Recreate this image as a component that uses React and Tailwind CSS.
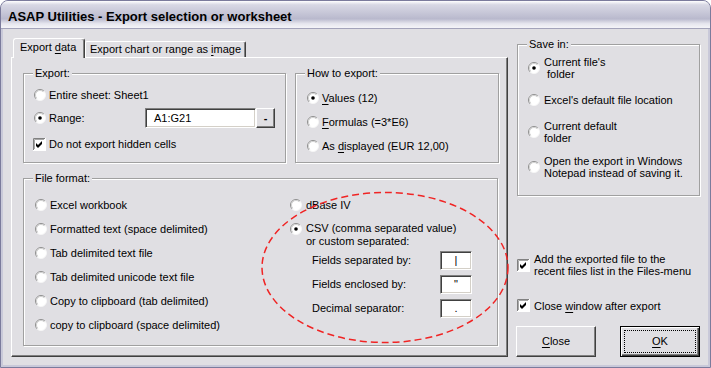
const Radio = ({ checked }) => (
  <svg width="12" height="12" viewBox="0 0 12 12" className="shrink-0">
    <circle cx="6" cy="6" r="5.5" fill="#fff" />
    <path d="M2.1 9.9A5.5 5.5 0 0 1 9.9 2.1" fill="none" stroke="#8f8f8f" />
    <path d="M2.8 9.2A4.5 4.5 0 0 1 9.2 2.8" fill="none" stroke="#cfcfcf" />
    <path d="M9.9 2.1A5.5 5.5 0 0 1 2.1 9.9" fill="none" stroke="#f6f6f6" />
    {checked && <circle cx="6" cy="6" r="1.8" fill="#000" />}
  </svg>
);

const Check = () => (
  <svg width="13" height="13" viewBox="0 0 13 13" className="shrink-0">
    <rect width="13" height="13" fill="#fff" />
    <path d="M0.5 12V0.5H12" fill="none" stroke="#808080" />
    <path d="M1.5 11V1.5H11" fill="none" stroke="#a8a8a8" />
    <path d="M0.5 12.5H12.5V0.5" fill="none" stroke="#fff" />
    <path d="M3 5L5 7L9 3V6L5 10L3 8Z" fill="#000" />
  </svg>
);

const Group = ({ label, className, children }) => (
  <div className={"border border-[#a0a0a0] shadow-[1px_1px_0_#fff,inset_1px_1px_0_#fff] " + className}>
    <div className="-mt-[7px] ml-[9px] w-fit px-[2px] bg-[#e0dfe3] leading-[13px]">{label}</div>
    {children}
  </div>
);

const Edit = ({ className, children }) => (
  <div className={"bg-white border border-t-[#808080] border-l-[#808080] border-b-white border-r-white shadow-[inset_1px_1px_0_#404040,inset_-1px_-1px_0_#d4d0c8] flex items-center " + className}>
    {children}
  </div>
);

const U = ({ children }) => <span className="underline underline-offset-[2px]">{children}</span>;

export default function App() {
  return (
    <div className="w-[711px] h-[368px] flex flex-col rounded-t-[8px] overflow-hidden border border-[#7b7b9c] bg-[#c9c9d9] font-['Liberation_Sans',Arial,sans-serif] text-[11px] text-black">
      {/* Title bar */}
      <div className="h-[28px] shrink-0 flex items-center pl-[7px] pt-[5px] text-[13px] font-bold border-b border-[#a3a3ba] bg-[linear-gradient(to_bottom,#ffffff_0%,#d8d8e4_14%,#c6c6d7_45%,#b9b9cd_66%,#e6e6ee_84%,#f4f4f8_100%)]">
        ASAP Utilities - Export selection or worksheet
      </div>

      {/* Body */}
      <div className="flex-1 mx-[2px] mb-[2px] bg-[#e0dfe3] flex items-start pl-[8px] pt-[9px] gap-[8px]">
        {/* Tabs + panel */}
        <div className="w-[497px] shrink-0 flex flex-col">
          <div className="relative z-10 flex items-end h-[19px] pl-[2px]">
            <div className="w-[72px] h-[20px] -mb-[1px] bg-[#e0dfe3] rounded-t-[3px] border-t border-l border-r border-t-white border-l-white border-r-[#404040] shadow-[inset_-1px_0_0_#808080] pl-[6px] pt-[2px] leading-[13px]">
              Export <U>d</U>ata
            </div>
            <div className="w-[161px] h-[16px] bg-[#e0dfe3] rounded-t-[2px] border-t border-l border-r border-t-white border-l-white border-r-[#404040] shadow-[inset_-1px_0_0_#808080] pl-[4px] pt-[1px] leading-[13px]">
              Export chart or range as <U>i</U>mage
            </div>
          </div>

          <div className="relative h-[300px] bg-[#e0dfe3] border border-t-white border-l-white border-r-[#404040] border-b-[#404040] shadow-[inset_-1px_-1px_0_#808080] pl-[11px] pt-[15px]">
            <div className="flex gap-[9px]">
              <Group label="Export:" className="w-[263px] h-[90px]">
                <div className="flex flex-col pl-[10px]">
                  <div className="mt-[5px] h-[20px] flex items-center gap-[3px]">
                    <Radio />
                    <span>Entire sheet: Sheet1</span>
                  </div>
                  <div className="mt-[3px] h-[20px] flex items-center">
                    <Radio checked />
                    <span className="ml-[3px] w-[96px]">Range:</span>
                    <Edit className="w-[111px] h-[20px] pl-[8px]">A1:G21</Edit>
                    <div className="w-[19px] h-[20px] flex items-center justify-center font-bold border border-t-white border-l-white border-b-[#404040] border-r-[#404040] shadow-[inset_-1px_-1px_0_#808080]">
                      -
                    </div>
                  </div>
                  <div className="mt-[6px] h-[20px] flex items-center gap-[3px] -ml-[1px]">
                    <Check />
                    <span>Do not export hidden cells</span>
                  </div>
                </div>
              </Group>

              <Group label="How to export:" className="w-[204px] h-[90px]">
                <div className="flex flex-col pl-[11px]">
                  <div className="mt-[8px] h-[20px] flex items-center gap-[3px]">
                    <Radio checked />
                    <span><U>V</U>alues (12)</span>
                  </div>
                  <div className="mt-[4px] h-[20px] flex items-center gap-[3px]">
                    <Radio />
                    <span><U>F</U>ormulas (=3*E6)</span>
                  </div>
                  <div className="mt-[4px] h-[20px] flex items-center gap-[3px]">
                    <Radio />
                    <span>As <U>d</U>isplayed (EUR 12,00)</span>
                  </div>
                </div>
              </Group>
            </div>

            <Group label="File format:" className="mt-[15px] w-[475px] h-[168px]">
              <div className="flex pl-[11px]">
                <div className="w-[255px] flex flex-col">
                  {[
                    "Excel workbook",
                    "Formatted text (space delimited)",
                    "Tab delimited text file",
                    "Tab delimited unicode text file",
                    "Copy to clipboard (tab delimited)",
                    "copy to clipboard (space delimited)",
                  ].map((t, i) => (
                    <div key={t} className={(i === 0 ? "mt-[10px]" : "mt-[4px]") + " h-[20px] flex items-center gap-[3px]"}>
                      <Radio />
                      <span>{t}</span>
                    </div>
                  ))}
                </div>
                <div className="flex flex-col">
                  <div className="mt-[10px] h-[20px] flex items-center gap-[4px]">
                    <Radio />
                    <span>dBase IV</span>
                  </div>
                  <div className="mt-[7px] flex items-start gap-[4px]">
                    <div className="mt-[1px]">
                      <Radio checked />
                    </div>
                    <div className="leading-[13px]">
                      CSV (comma separated value)
                      <br />
                      or custom separated:
                    </div>
                  </div>
                  <div className="pl-[22px] flex flex-col">
                    {[
                      ["Fields separated by:", "|"],
                      ["Fields enclosed by:", '"'],
                      ["Decimal separator:", "."],
                    ].map(([l, v], i) => (
                      <div key={l} className={(i === 0 ? "mt-[3px]" : "mt-[5px]") + " h-[19px] flex items-center"}>
                        <span className="w-[128px]">{l}</span>
                        <Edit className="w-[32px] h-[19px] justify-center">{v}</Edit>
                      </div>
                    ))}
                  </div>
                </div>
              </div>
            </Group>

            {/* red highlight */}
            <svg width="248" height="153" className="absolute left-[249px] top-[133px] pointer-events-none">
              <ellipse cx="124" cy="76.5" rx="123" ry="75" fill="none" stroke="#f02424" strokeWidth="1.5" strokeDasharray="7 4" />
            </svg>
          </div>
        </div>

        {/* Right column */}
        <div className="w-[184px] shrink-0 flex flex-col">
          <Group label="Save in:" className="mt-[6px] ml-[1px] w-[183px] h-[152px]">
            <div className="flex flex-col pl-[10px] leading-[12px]">
              <div className="mt-[5px] flex items-center gap-[4px]">
                <Radio checked />
                <span>
                  Current file's
                  <br />
                  {"\u00a0folder"}
                </span>
              </div>
              <div className="mt-[14px] flex items-center gap-[4px]">
                <Radio />
                <span>Excel's default file location</span>
              </div>
              <div className="mt-[14px] flex items-center gap-[4px]">
                <Radio />
                <span>
                  Current default
                  <br />
                  folder
                </span>
              </div>
              <div className="mt-[11px] flex items-center gap-[4px]">
                <Radio />
                <span>
                  Open the export in Windows
                  <br />
                  Notepad instead of saving it.
                </span>
              </div>
            </div>
          </Group>

          <div className="mt-[57px] ml-[1px] flex items-center gap-[4px] leading-[12px]">
            <Check />
            <span>
              Add the exported file to the
              <br />
              recent files list in the Files-menu
            </span>
          </div>
          <div className="mt-[22px] ml-[1px] flex items-center gap-[4px] leading-[12px]">
            <Check />
            <span>
              Close <U>w</U>indow after export
            </span>
          </div>

          <div className="mt-[14px] flex gap-[24px]">
            <div className="w-[80px] h-[31px] flex items-center justify-center border border-t-white border-l-white border-b-[#404040] border-r-[#404040] shadow-[inset_-1px_-1px_0_#808080]">
              <span>
                <U>C</U>lose
              </span>
            </div>
            <div className="w-[80px] h-[31px] flex p-[3px] border border-black shadow-[inset_1px_1px_0_#fff,inset_-1px_-1px_0_#404040,inset_-2px_-2px_0_#808080]">
              <div className="flex-1 flex items-center justify-center border border-dotted border-black">
                <span>
                  <U>O</U>K
                </span>
              </div>
            </div>
          </div>
        </div>
      </div>
    </div>
  );
}
